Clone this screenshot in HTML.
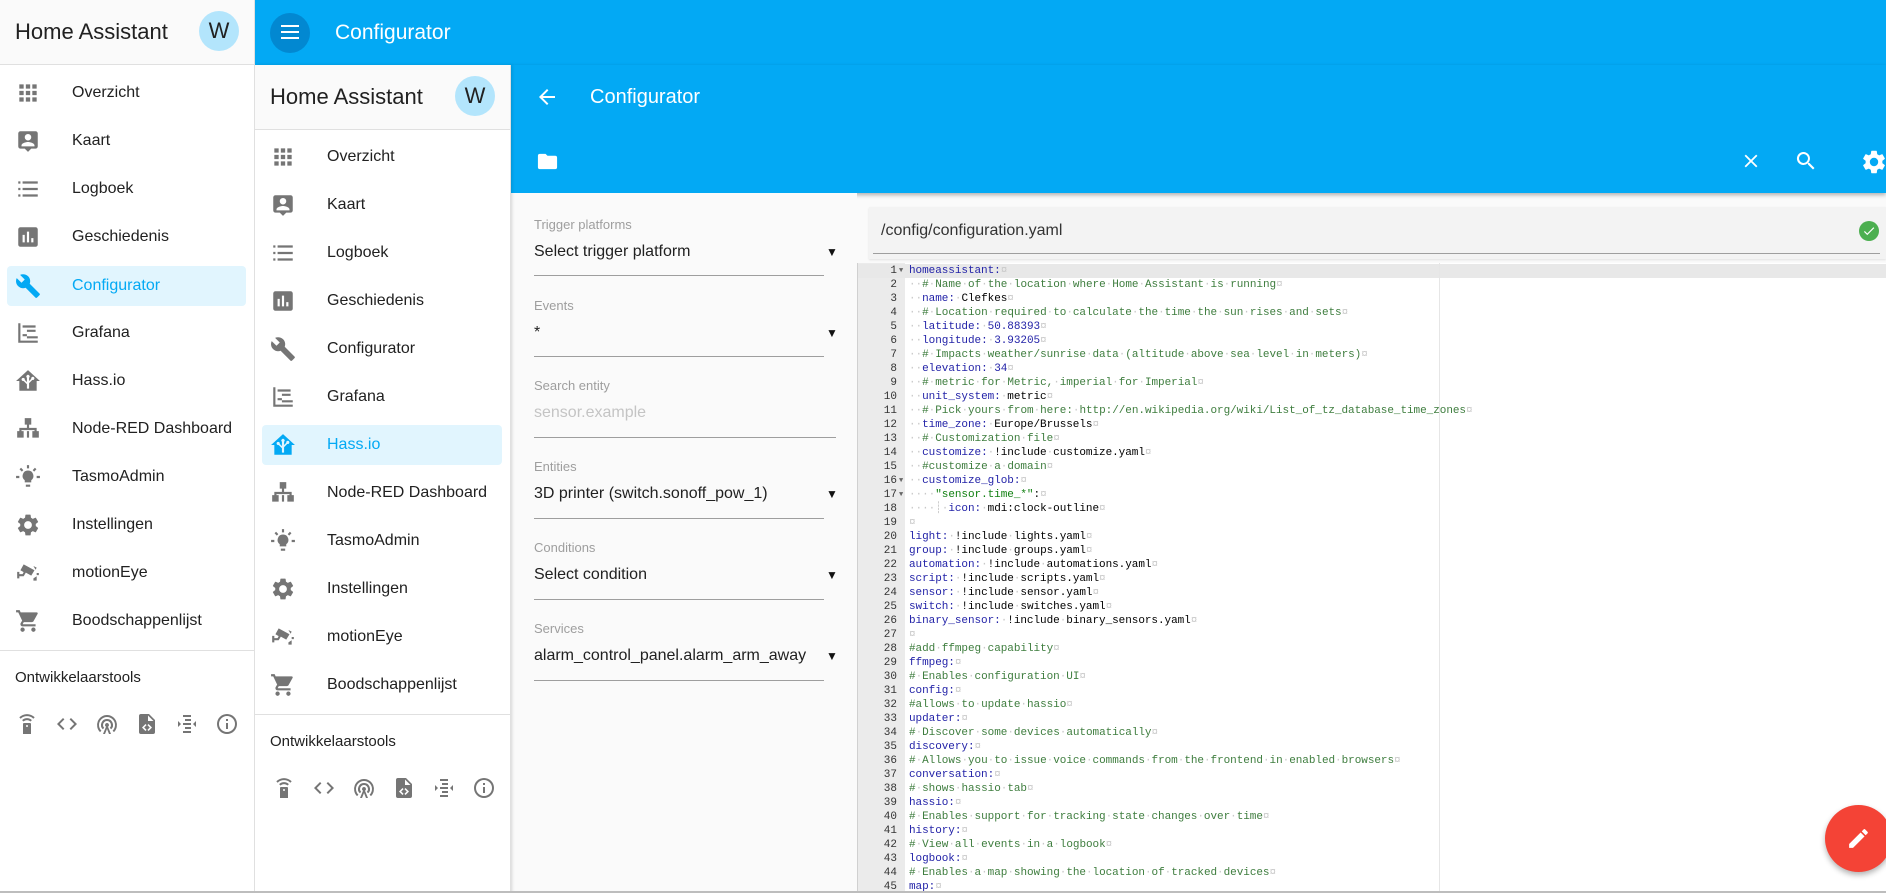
<!DOCTYPE html>
<html><head><meta charset="utf-8">
<style>
*{box-sizing:border-box;margin:0;padding:0}
body{width:1886px;height:893px;overflow:hidden;position:relative;background:#fafafa;font-family:"Liberation Sans",sans-serif;color:#212121}
.abs{position:absolute}
.sb{position:absolute;background:#fff;border-right:1px solid #e0e0e0}
.sbh{position:absolute;left:0;top:0;right:0;height:65px;background:#fafafa;border-bottom:1px solid #e0e0e0}
.sbh .t{position:absolute;left:15px;top:19px;font-size:22px;color:#212121}
.sbh .av{position:absolute;right:15px;top:11px;width:40px;height:40px;border-radius:50%;background:#b3e5fc;text-align:center;line-height:40px;font-size:22px;color:#212121}
.it{position:absolute;left:0;right:0;height:40px}
.it svg{position:absolute;left:15px;top:7px;width:26px;height:26px;fill:#757575}
.it span{position:absolute;left:72px;top:11px;font-size:16px;color:#212121}
.it.act{left:7px;right:8px;background:#e1f5fe;border-radius:4px}
.it.act svg{left:8px;fill:#03a9f4}.it.act span{left:65px;color:#03a9f4}
.div{position:absolute;left:0;right:0;height:1px;background:#e0e0e0}
.dt{position:absolute;left:15px;font-size:15px;color:#212121}
.di svg{position:absolute;width:24px;height:24px;fill:#757575}
.lab{position:absolute;left:534px;font-size:13px;color:#9e9e9e}
.val{position:absolute;left:534px;font-size:16px;color:#212121}
.ul{position:absolute;left:534px;width:290px;height:1px;background:#9e9e9e}
.arr{position:absolute;left:826px;font-size:12px;color:#111}
#code{position:absolute;left:857px;top:263px;width:1029px;height:630px;background:#fff;overflow:hidden}
#gut{position:absolute;left:0;top:0;width:48px;height:630px;background:#ebebeb}
.ln{position:absolute;left:0;width:1029px;height:14px;font-family:"Liberation Mono",monospace;font-size:11px;line-height:14px;letter-spacing:-0.05px;white-space:pre}
.ln b{position:absolute;left:0;width:40px;text-align:right;font-weight:normal;color:#333;letter-spacing:0}
.ln em{position:absolute;left:42px;font-style:normal;font-size:7px;color:#666}
.ln u{position:absolute;left:52px;text-decoration:none;color:#000}
.k{color:#2323a8}.c{color:#3e7d3e}.s{color:#118011}.n{color:#2323a8}
i{font-style:normal;color:#c8c8c8}
</style></head><body>
<svg width="0" height="0" style="position:absolute">
<defs>
<symbol id="apps" viewBox="0 0 24 24"><path d="M4 8h4V4H4v4zm6 12h4v-4h-4v4zm-6 0h4v-4H4v4zm0-6h4v-4H4v4zm6 0h4v-4h-4v4zm6-10v4h4V4h-4zm-6 4h4V4h-4v4zm6 6h4v-4h-4v4zm0 6h4v-4h-4v4z"/></symbol>
<symbol id="map" viewBox="0 0 24 24"><path d="M19 3H5a2 2 0 0 0-2 2v12a2 2 0 0 0 2 2h4l3 3 3-3h4a2 2 0 0 0 2-2V5a2 2 0 0 0-2-2zm-7 2.5a3 3 0 1 1 0 6 3 3 0 0 1 0-6zM18 17H6v-1c0-2 4-3.1 6-3.1s6 1.1 6 3.1v1z"/></symbol>
<symbol id="list" viewBox="0 0 24 24"><path d="M7 5h14v2H7zm0 6h14v2H7zm0 6h14v2H7zM3 5h2v2H3zm0 6h2v2H3zm0 6h2v2H3z"/></symbol>
<symbol id="chart" viewBox="0 0 24 24"><path d="M19 3H5c-1.1 0-2 .9-2 2v14c0 1.1.9 2 2 2h14c1.1 0 2-.9 2-2V5c0-1.1-.9-2-2-2zM9 17H7v-7h2v7zm4 0h-2V7h2v10zm4 0h-2v-4h2v4z"/></symbol>
<symbol id="wrench" viewBox="0 0 24 24"><path d="M22.7 19l-9.1-9.1c.9-2.3.4-5-1.5-6.9-2-2-5-2.4-7.4-1.3L9 6 6 9 1.6 4.7C.4 7.1.9 10.1 2.9 12.1c1.9 1.9 4.6 2.4 6.9 1.5l9.1 9.1c.4.4 1 .4 1.4 0l2.3-2.3c.5-.4.5-1.1.1-1.4z"/></symbol>
<symbol id="graf" viewBox="0 0 24 24"><path d="M3 3h2v16h16v2H3zm4 2h12v2H7zm4 4h8v2h-8zm-4 4h4v2H7zm4 2h10v2H11z"/></symbol>
<symbol id="hass" viewBox="0 0 24 24"><path d="M12 2 1 12h3v9h16v-9h3L12 2zm-1 17v-4l-3-3a1.5 1.5 0 1 1 1-1l2 2V9a1.5 1.5 0 1 1 2 0v3l2-2a1.5 1.5 0 1 1 1 1l-3 3v5z"/></symbol>
<symbol id="site" viewBox="0 0 24 24"><path d="M9 2h6v6h-2v3h7v3h2v6h-6v-6h2v-1H6v1h2v6H2v-6h2v-3h7V8H9zm2 12h2v6h-2v-6z"/></symbol>
<symbol id="bulb" viewBox="0 0 24 24"><path d="M12 6a5 5 0 0 0-3 9v2h6v-2a5 5 0 0 0-3-9zm-2 13h4v2h-4zM1 11h3v2H1zm19 0h3v2h-3zM11 1h2v3h-2zM4.2 4.9l1.4-1.4 2.1 2.1-1.4 1.4zm12.1.7 2.1-2.1 1.4 1.4-2.1 2.1z"/></symbol>
<symbol id="gear" viewBox="0 0 24 24"><path d="M19.14 12.94c.04-.3.06-.61.06-.94 0-.32-.02-.64-.07-.94l2.03-1.58a.49.49 0 0 0 .12-.61l-1.92-3.32a.49.49 0 0 0-.59-.22l-2.39.96c-.5-.38-1.030-.7-1.62-.94l-.36-2.54a.48.48 0 0 0-.48-.41h-3.84c-.24 0-.43.17-.47.41l-.36 2.54c-.59.24-1.13.57-1.62.94l-2.39-.96a.48.48 0 0 0-.59.22L2.74 8.87c-.12.21-.08.47.12.61l2.03 1.58c-.05.3-.09.63-.09.94s.02.64.07.94l-2.03 1.58a.49.49 0 0 0-.12.61l1.920 3.32c.12.22.37.29.59.22l2.39-.96c.5.38 1.03.7 1.62.94l.36 2.54c.05.24.24.41.48.41h3.84c.24 0 .44-.17.47-.41l.36-2.54c.59-.24 1.13-.56 1.62-.94l2.39.96c.22.08.47 0 .59-.22l1.92-3.32c.12-.22.07-.47-.12-.61l-2.01-1.58zM12 15.6A3.6 3.6 0 1 1 12 8.4a3.6 3.6 0 0 1 0 7.2z"/></symbol>
<symbol id="cam" viewBox="0 0 24 24"><path d="M18 9.5 8 4 5 9.5l3 1.7-1 1.8H4v-2H2v6h2v-2h4l2-3.4 5 2.8zM17 17v2h3v-5h2v-2h-2v3z M19 9l1-2-3-1.5z"/></symbol>
<symbol id="cart" viewBox="0 0 24 24"><path d="M7 18c-1.1 0-2 .9-2 2s.9 2 2 2 2-.9 2-2-.9-2-2-2zM1 2v2h2l3.6 7.6L5.2 14c-.1.3-.2.6-.2 1 0 1.1.9 2 2 2h12v-2H7.4c-.1 0-.2-.1-.2-.2v-.1l.9-1.7h7.4c.8 0 1.4-.4 1.7-1l3.6-6.5c.1-.2.2-.3.2-.5 0-.6-.4-1-1-1H5.2l-.9-2H1zm16 16c-1.1 0-2 .9-2 2s.9 2 2 2 2-.9 2-2-.9-2-2-2z"/></symbol>
<symbol id="remote" viewBox="0 0 24 24"><path d="M9 11h6c.6 0 1 .4 1 1v10H8V12c0-.6.4-1 1-1zm3 2a1 1 0 1 0 0 2 1 1 0 0 0 0-2zM7.1 8.1A7 7 0 0 1 16.9 8.1L15.5 9.5a5 5 0 0 0-7 0zM4.3 5.3a11 11 0 0 1 15.4 0l-1.4 1.4a9 9 0 0 0-12.6 0z"/></symbol>
<symbol id="codei" viewBox="0 0 24 24"><path d="M9.4 16.6 4.8 12l4.6-4.6L8 6l-6 6 6 6 1.4-1.4zm5.2 0 4.6-4.6-4.6-4.6L16 6l6 6-6 6-1.4-1.4z"/></symbol>
<symbol id="ant" viewBox="0 0 24 24"><path d="M12 11a2 2 0 0 1 1 3.7l3 7.3h-2l-2-5-2 5H8l3-7.3A2 2 0 0 1 12 11zm0-4a6 6 0 0 1 4.2 10.3l-1.4-1.4a4 4 0 1 0-5.6 0l-1.4 1.4A6 6 0 0 1 12 7zm0-4a10 10 0 0 1 7 17.1l-1.4-1.4a8 8 0 1 0-11.2 0L5 20.1A10 10 0 0 1 12 3z"/></symbol>
<symbol id="file" viewBox="0 0 24 24"><path d="M14 2H6a2 2 0 0 0-2 2v16a2 2 0 0 0 2 2h12a2 2 0 0 0 2-2V8l-6-6zm-3.5 17L7 15.5l3.5-3.5 1.1 1.1-2.4 2.4 2.4 2.4zm3 0-1.1-1.1 2.4-2.4-2.4-2.4 1.1-1.1 3.5 3.5zM13 9V3.5L18.5 9z"/></symbol>
<symbol id="tmpl" viewBox="0 0 24 24"><path d="M8 3h8v2H8zm2 4h6v2h-6zm-2 4h8v2H8zm2 4h6v2h-6zm-2 4h8v2H8zM3 9v6l3-3zm18 0v6l-3-3z"/></symbol>
<symbol id="info" viewBox="0 0 24 24"><path d="M11 7h2v2h-2zm0 4h2v6h-2zm1-9a10 10 0 1 0 0 20 10 10 0 0 0 0-20zm0 18a8 8 0 1 1 0-16 8 8 0 0 1 0 16z"/></symbol>
</defs></svg>

<!-- top blue bar -->
<div class="abs" style="left:255px;top:0;width:1631px;height:65px;background:#03a9f4"></div>
<div class="abs" style="left:270px;top:13px;width:40px;height:40px;border-radius:50%;background:#0288d1"></div>
<div class="abs" style="left:281px;top:25px;width:18px;height:2px;background:#fff;box-shadow:0 6px 0 #fff,0 12px 0 #fff"></div>
<div class="abs" style="left:335px;top:21px;font-size:21px;color:#fff">Configurator</div>

<!-- configurator panel header -->
<div class="abs" style="left:511px;top:65px;width:1375px;height:128px;background:#03a9f4;box-shadow:0 2px 4px rgba(0,0,0,.3)"></div>
<svg class="abs" style="left:535px;top:85px" width="24" height="24" viewBox="0 0 24 24" fill="#fff"><path d="M20 11H7.8l5.6-5.6L12 4l-8 8 8 8 1.4-1.4L7.8 13H20z"/></svg>
<div class="abs" style="left:590px;top:86px;font-size:20px;color:#fff">Configurator</div>
<svg class="abs" style="left:536px;top:150px" width="23" height="23" viewBox="0 0 24 24" fill="#fff"><path d="M10 4H4a2 2 0 0 0-2 2v12a2 2 0 0 0 2 2h16a2 2 0 0 0 2-2V8a2 2 0 0 0-2-2h-8z"/></svg>
<svg class="abs" style="left:1740px;top:150px" width="22" height="22" viewBox="0 0 24 24" fill="#fff"><path d="M19 6.4 17.6 5 12 10.6 6.4 5 5 6.4 10.6 12 5 17.6 6.4 19 12 13.4 17.6 19 19 17.6 13.4 12z"/></svg>
<svg class="abs" style="left:1794px;top:149px" width="24" height="24" viewBox="0 0 24 24" fill="#fff"><path d="M15.5 14h-.8l-.3-.3A6.5 6.5 0 1 0 9.5 16a6.5 6.5 0 0 0 4.2-1.6l.3.3v.8l5 5 1.5-1.5-5-5zm-6 0a4.5 4.5 0 1 1 0-9 4.5 4.5 0 0 1 0 9z"/></svg>
<svg class="abs" style="left:1860px;top:148px" width="28" height="28" viewBox="0 0 24 24" fill="#fff"><use href="#gear"/></svg>

<!-- form panel -->
<div class="abs" style="left:511px;top:193px;width:346px;height:700px;background:#fafafa"></div>
<div class="lab" style="top:217px">Trigger platforms</div>
<div class="val" style="top:243px">Select trigger platform</div>
<div class="arr" style="top:245px">▼</div>
<div class="ul" style="top:275px"></div>
<div class="lab" style="top:298px">Events</div>
<div class="val" style="top:324px">*</div>
<div class="arr" style="top:326px">▼</div>
<div class="ul" style="top:356px"></div>
<div class="lab" style="top:378px">Search entity</div>
<div class="val" style="top:404px;color:#c4c4c4">sensor.example</div>
<div class="ul" style="top:437px;width:302px"></div>
<div class="lab" style="top:459px">Entities</div>
<div class="val" style="top:485px">3D printer (switch.sonoff_pow_1)</div>
<div class="arr" style="top:487px">▼</div>
<div class="ul" style="top:518px"></div>
<div class="lab" style="top:540px">Conditions</div>
<div class="val" style="top:566px">Select condition</div>
<div class="arr" style="top:568px">▼</div>
<div class="ul" style="top:599px"></div>
<div class="lab" style="top:621px">Services</div>
<div class="val" style="top:647px">alarm_control_panel.alarm_arm_away</div>
<div class="arr" style="top:649px">▼</div>
<div class="ul" style="top:680px"></div>

<!-- editor header -->
<div class="abs" style="left:869px;top:207px;width:1017px;height:52px;background:#f3f3f3;box-shadow:0 1px 2px rgba(0,0,0,.1)"></div>
<div class="abs" style="left:881px;top:222px;font-size:16px;color:#333">/config/configuration.yaml</div>
<div class="abs" style="left:873px;top:253px;width:1007px;height:1px;background:#9e9e9e"></div>
<div class="abs" style="left:1859px;top:221px;width:20px;height:20px;border-radius:50%;background:#4caf50"></div>
<svg class="abs" style="left:1862px;top:224px" width="14" height="14" viewBox="0 0 24 24" fill="#fff"><path d="M9 16.2 4.8 12l-1.4 1.4L9 19 21 7l-1.4-1.4z"/></svg>

<!-- code -->
<div id="code">
<div id="gut"></div>
<div class="abs" style="left:0;top:1px;width:1029px;height:14px;background:#e8e8e8"></div>
<div class="abs" style="left:582px;top:0;width:1px;height:630px;background:#e6e6e6"></div>
<div class="ln" style="top:1px"><b>1</b><em>▼</em><u><span class="k">homeassistant:</span><i>¤</i></u></div>
<div class="ln" style="top:15px"><b>2</b><u><i>··</i><span class="c">#<i>·</i>Name<i>·</i>of<i>·</i>the<i>·</i>location<i>·</i>where<i>·</i>Home<i>·</i>Assistant<i>·</i>is<i>·</i>running</span><i>¤</i></u></div>
<div class="ln" style="top:29px"><b>3</b><u><i>··</i><span class="k">name:</span><i>·</i>Clefkes<i>¤</i></u></div>
<div class="ln" style="top:43px"><b>4</b><u><i>··</i><span class="c">#<i>·</i>Location<i>·</i>required<i>·</i>to<i>·</i>calculate<i>·</i>the<i>·</i>time<i>·</i>the<i>·</i>sun<i>·</i>rises<i>·</i>and<i>·</i>sets</span><i>¤</i></u></div>
<div class="ln" style="top:57px"><b>5</b><u><i>··</i><span class="k">latitude:</span><i>·</i><span class="n">50.88393</span><i>¤</i></u></div>
<div class="ln" style="top:71px"><b>6</b><u><i>··</i><span class="k">longitude:</span><i>·</i><span class="n">3.93205</span><i>¤</i></u></div>
<div class="ln" style="top:85px"><b>7</b><u><i>··</i><span class="c">#<i>·</i>Impacts<i>·</i>weather/sunrise<i>·</i>data<i>·</i>(altitude<i>·</i>above<i>·</i>sea<i>·</i>level<i>·</i>in<i>·</i>meters)</span><i>¤</i></u></div>
<div class="ln" style="top:99px"><b>8</b><u><i>··</i><span class="k">elevation:</span><i>·</i><span class="n">34</span><i>¤</i></u></div>
<div class="ln" style="top:113px"><b>9</b><u><i>··</i><span class="c">#<i>·</i>metric<i>·</i>for<i>·</i>Metric,<i>·</i>imperial<i>·</i>for<i>·</i>Imperial</span><i>¤</i></u></div>
<div class="ln" style="top:127px"><b>10</b><u><i>··</i><span class="k">unit_system:</span><i>·</i>metric<i>¤</i></u></div>
<div class="ln" style="top:141px"><b>11</b><u><i>··</i><span class="c">#<i>·</i>Pick<i>·</i>yours<i>·</i>from<i>·</i>here:<i>·</i>http://en.wikipedia.org/wiki/List_of_tz_database_time_zones</span><i>¤</i></u></div>
<div class="ln" style="top:155px"><b>12</b><u><i>··</i><span class="k">time_zone:</span><i>·</i>Europe/Brussels<i>¤</i></u></div>
<div class="ln" style="top:169px"><b>13</b><u><i>··</i><span class="c">#<i>·</i>Customization<i>·</i>file</span><i>¤</i></u></div>
<div class="ln" style="top:183px"><b>14</b><u><i>··</i><span class="k">customize:</span><i>·</i>!include<i>·</i>customize.yaml<i>¤</i></u></div>
<div class="ln" style="top:197px"><b>15</b><u><i>··</i><span class="c">#customize<i>·</i>a<i>·</i>domain</span><i>¤</i></u></div>
<div class="ln" style="top:211px"><b>16</b><em>▼</em><u><i>··</i><span class="k">customize_glob:</span><i>¤</i></u></div>
<div class="ln" style="top:225px"><b>17</b><em>▼</em><u><i>····</i><span class="s">"sensor.time_*"</span>:<i>¤</i></u></div>
<div class="ln" style="top:239px"><b>18</b><u><i>····┊·</i><span class="k">icon:</span><i>·</i>mdi:clock-outline<i>¤</i></u></div>
<div class="ln" style="top:253px"><b>19</b><u><i>¤</i></u></div>
<div class="ln" style="top:267px"><b>20</b><u><span class="k">light:</span><i>·</i>!include<i>·</i>lights.yaml<i>¤</i></u></div>
<div class="ln" style="top:281px"><b>21</b><u><span class="k">group:</span><i>·</i>!include<i>·</i>groups.yaml<i>¤</i></u></div>
<div class="ln" style="top:295px"><b>22</b><u><span class="k">automation:</span><i>·</i>!include<i>·</i>automations.yaml<i>¤</i></u></div>
<div class="ln" style="top:309px"><b>23</b><u><span class="k">script:</span><i>·</i>!include<i>·</i>scripts.yaml<i>¤</i></u></div>
<div class="ln" style="top:323px"><b>24</b><u><span class="k">sensor:</span><i>·</i>!include<i>·</i>sensor.yaml<i>¤</i></u></div>
<div class="ln" style="top:337px"><b>25</b><u><span class="k">switch:</span><i>·</i>!include<i>·</i>switches.yaml<i>¤</i></u></div>
<div class="ln" style="top:351px"><b>26</b><u><span class="k">binary_sensor:</span><i>·</i>!include<i>·</i>binary_sensors.yaml<i>¤</i></u></div>
<div class="ln" style="top:365px"><b>27</b><u><i>¤</i></u></div>
<div class="ln" style="top:379px"><b>28</b><u><span class="c">#add<i>·</i>ffmpeg<i>·</i>capability</span><i>¤</i></u></div>
<div class="ln" style="top:393px"><b>29</b><u><span class="k">ffmpeg:</span><i>¤</i></u></div>
<div class="ln" style="top:407px"><b>30</b><u><span class="c">#<i>·</i>Enables<i>·</i>configuration<i>·</i>UI</span><i>¤</i></u></div>
<div class="ln" style="top:421px"><b>31</b><u><span class="k">config:</span><i>¤</i></u></div>
<div class="ln" style="top:435px"><b>32</b><u><span class="c">#allows<i>·</i>to<i>·</i>update<i>·</i>hassio</span><i>¤</i></u></div>
<div class="ln" style="top:449px"><b>33</b><u><span class="k">updater:</span><i>¤</i></u></div>
<div class="ln" style="top:463px"><b>34</b><u><span class="c">#<i>·</i>Discover<i>·</i>some<i>·</i>devices<i>·</i>automatically</span><i>¤</i></u></div>
<div class="ln" style="top:477px"><b>35</b><u><span class="k">discovery:</span><i>¤</i></u></div>
<div class="ln" style="top:491px"><b>36</b><u><span class="c">#<i>·</i>Allows<i>·</i>you<i>·</i>to<i>·</i>issue<i>·</i>voice<i>·</i>commands<i>·</i>from<i>·</i>the<i>·</i>frontend<i>·</i>in<i>·</i>enabled<i>·</i>browsers</span><i>¤</i></u></div>
<div class="ln" style="top:505px"><b>37</b><u><span class="k">conversation:</span><i>¤</i></u></div>
<div class="ln" style="top:519px"><b>38</b><u><span class="c">#<i>·</i>shows<i>·</i>hassio<i>·</i>tab</span><i>¤</i></u></div>
<div class="ln" style="top:533px"><b>39</b><u><span class="k">hassio:</span><i>¤</i></u></div>
<div class="ln" style="top:547px"><b>40</b><u><span class="c">#<i>·</i>Enables<i>·</i>support<i>·</i>for<i>·</i>tracking<i>·</i>state<i>·</i>changes<i>·</i>over<i>·</i>time</span><i>¤</i></u></div>
<div class="ln" style="top:561px"><b>41</b><u><span class="k">history:</span><i>¤</i></u></div>
<div class="ln" style="top:575px"><b>42</b><u><span class="c">#<i>·</i>View<i>·</i>all<i>·</i>events<i>·</i>in<i>·</i>a<i>·</i>logbook</span><i>¤</i></u></div>
<div class="ln" style="top:589px"><b>43</b><u><span class="k">logbook:</span><i>¤</i></u></div>
<div class="ln" style="top:603px"><b>44</b><u><span class="c">#<i>·</i>Enables<i>·</i>a<i>·</i>map<i>·</i>showing<i>·</i>the<i>·</i>location<i>·</i>of<i>·</i>tracked<i>·</i>devices</span><i>¤</i></u></div>
<div class="ln" style="top:617px"><b>45</b><u><span class="k">map:</span><i>¤</i></u></div>
</div>
<div class="abs" style="left:857px;top:263px;width:1px;height:630px;background:#d0d0d0"></div>

<!-- FAB -->
<div class="abs" style="left:1825px;top:805px;width:67px;height:67px;border-radius:50%;background:#f44336;box-shadow:0 3px 6px rgba(0,0,0,.3)"></div>
<svg class="abs" style="left:1846px;top:826px" width="25" height="25" viewBox="0 0 24 24" fill="#fff"><path d="M3 17.25V21h3.75L17.8 9.94l-3.75-3.75zM20.7 7.04a1 1 0 0 0 0-1.41l-2.34-2.34a1 1 0 0 0-1.41 0l-1.830 1.83 3.75 3.75z"/></svg>

<!-- sidebar 2 -->
<div class="sb" style="left:255px;top:65px;width:256px;height:828px;box-shadow:1px 0 3px rgba(0,0,0,.15)">
<div class="sbh"><div class="t">Home Assistant</div><div class="av">W</div></div>
<div class="it" style="top:72px"><svg><use href="#apps"/></svg><span>Overzicht</span></div>
<div class="it" style="top:120px"><svg><use href="#map"/></svg><span>Kaart</span></div>
<div class="it" style="top:168px"><svg><use href="#list"/></svg><span>Logboek</span></div>
<div class="it" style="top:216px"><svg><use href="#chart"/></svg><span>Geschiedenis</span></div>
<div class="it" style="top:264px"><svg><use href="#wrench"/></svg><span>Configurator</span></div>
<div class="it" style="top:312px"><svg><use href="#graf"/></svg><span>Grafana</span></div>
<div class="it act" style="top:360px"><svg><use href="#hass"/></svg><span>Hass.io</span></div>
<div class="it" style="top:408px"><svg><use href="#site"/></svg><span>Node-RED Dashboard</span></div>
<div class="it" style="top:456px"><svg><use href="#bulb"/></svg><span>TasmoAdmin</span></div>
<div class="it" style="top:504px"><svg><use href="#gear"/></svg><span>Instellingen</span></div>
<div class="it" style="top:552px"><svg><use href="#cam"/></svg><span>motionEye</span></div>
<div class="it" style="top:600px"><svg><use href="#cart"/></svg><span>Boodschappenlijst</span></div>
<div class="div" style="top:649px"></div>
<div class="dt" style="top:668px">Ontwikkelaarstools</div>
<div class="di">
<svg style="left:17px;top:711px"><use href="#remote"/></svg><svg style="left:57px;top:711px"><use href="#codei"/></svg><svg style="left:97px;top:711px"><use href="#ant"/></svg><svg style="left:137px;top:711px"><use href="#file"/></svg><svg style="left:177px;top:711px"><use href="#tmpl"/></svg><svg style="left:217px;top:711px"><use href="#info"/></svg>
</div>
</div>

<!-- sidebar 1 -->
<div class="sb" style="left:0;top:0;width:255px;height:893px">
<div class="sbh"><div class="t">Home Assistant</div><div class="av">W</div></div>
<div class="it" style="top:73px"><svg><use href="#apps"/></svg><span>Overzicht</span></div>
<div class="it" style="top:121px"><svg><use href="#map"/></svg><span>Kaart</span></div>
<div class="it" style="top:169px"><svg><use href="#list"/></svg><span>Logboek</span></div>
<div class="it" style="top:217px"><svg><use href="#chart"/></svg><span>Geschiedenis</span></div>
<div class="it act" style="top:266px"><svg><use href="#wrench"/></svg><span>Configurator</span></div>
<div class="it" style="top:313px"><svg><use href="#graf"/></svg><span>Grafana</span></div>
<div class="it" style="top:361px"><svg><use href="#hass"/></svg><span>Hass.io</span></div>
<div class="it" style="top:409px"><svg><use href="#site"/></svg><span>Node-RED Dashboard</span></div>
<div class="it" style="top:457px"><svg><use href="#bulb"/></svg><span>TasmoAdmin</span></div>
<div class="it" style="top:505px"><svg><use href="#gear"/></svg><span>Instellingen</span></div>
<div class="it" style="top:553px"><svg><use href="#cam"/></svg><span>motionEye</span></div>
<div class="it" style="top:601px"><svg><use href="#cart"/></svg><span>Boodschappenlijst</span></div>
<div class="div" style="top:650px"></div>
<div class="dt" style="top:669px">Ontwikkelaarstools</div>
<div class="di">
<svg style="left:15px;top:712px"><use href="#remote"/></svg><svg style="left:55px;top:712px"><use href="#codei"/></svg><svg style="left:95px;top:712px"><use href="#ant"/></svg><svg style="left:135px;top:712px"><use href="#file"/></svg><svg style="left:175px;top:712px"><use href="#tmpl"/></svg><svg style="left:215px;top:712px"><use href="#info"/></svg>
</div>
</div>
<div class="abs" style="left:0;top:891px;width:1886px;height:2px;background:#bdbdbd"></div>
</body></html>
